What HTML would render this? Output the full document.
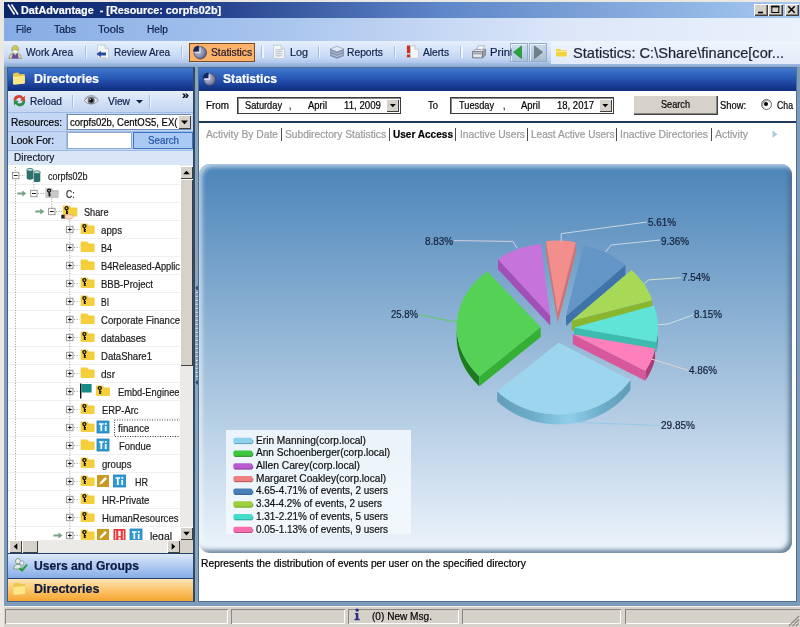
<!DOCTYPE html>
<html><head><meta charset="utf-8"><title>DatAdvantage</title>
<style>
html,body{margin:0;padding:0;width:800px;height:627px;overflow:hidden;background:#d6d2ca}
#root{position:relative;width:800px;height:627px;overflow:hidden;font-family:"Liberation Sans",sans-serif;will-change:transform}
#root div{position:absolute}
.t{position:absolute;white-space:pre;font-family:"Liberation Sans",sans-serif;transform-origin:0 50%;-webkit-text-stroke:0.2px currentColor}
</style></head><body><div id="root">
<div style="left:0px;top:0px;width:800px;height:627px;background:#d6d2ca"></div>
<div style="left:0px;top:0px;width:4px;height:627px;background:#ebe8e1"></div>
<div style="left:0px;top:0px;width:800px;height:2px;background:#ebe8e1"></div>
<div style="left:4px;top:2px;width:796px;height:16px;background:linear-gradient(90deg,#0a246a 0%,#1c3884 22%,#5f86c8 55%,#a6caf0 100%)"></div>
<div style="left:754px;top:3.5px;width:13.5px;height:12px;background:#d6d2ca;box-shadow:inset 1px 1px 0 #fff,inset -1px -1px 0 #404040,inset -2px -2px 0 #8a8780"></div>
<div style="left:768px;top:3.5px;width:14.5px;height:12px;background:#d6d2ca;box-shadow:inset 1px 1px 0 #fff,inset -1px -1px 0 #404040,inset -2px -2px 0 #8a8780"></div>
<div style="left:784.5px;top:3.5px;width:14px;height:12px;background:#d6d2ca;box-shadow:inset 1px 1px 0 #fff,inset -1px -1px 0 #404040,inset -2px -2px 0 #8a8780"></div>
<div style="left:4px;top:18px;width:796px;height:23px;background:linear-gradient(90deg,#86ace4 0%,#a9c5ee 35%,#dbe6f8 70%,#eaf1fb 100%)"></div>
<div style="left:4px;top:41px;width:796px;height:24px;background:linear-gradient(180deg,#e6effc 0%,#d2e1f8 45%,#c0d4f2 75%,#a5bfe6 100%)"></div>
<div style="left:4px;top:63px;width:796px;height:4px;background:linear-gradient(180deg,#a5bfe6,#86a6d0)"></div>
<div style="left:551px;top:41px;width:249px;height:23px;background:linear-gradient(180deg,#f0f5fd,#e2ebf9)"></div>
<div style="left:189px;top:43px;width:66px;height:18.5px;background:#fbb36c;border:1px solid #7a4a22;box-sizing:border-box"></div>
<div style="left:85.5px;top:45.5px;width:1.5px;height:12.5px;background:#eef4fd"></div>
<div style="left:84.8px;top:45.5px;width:0.7px;height:12.5px;background:#a9bfe0"></div>
<div style="left:181.5px;top:45.5px;width:1.5px;height:12.5px;background:#eef4fd"></div>
<div style="left:180.8px;top:45.5px;width:0.7px;height:12.5px;background:#a9bfe0"></div>
<div style="left:262px;top:45.5px;width:1.5px;height:12.5px;background:#eef4fd"></div>
<div style="left:261.3px;top:45.5px;width:0.7px;height:12.5px;background:#a9bfe0"></div>
<div style="left:318.5px;top:45.5px;width:1.5px;height:12.5px;background:#eef4fd"></div>
<div style="left:317.8px;top:45.5px;width:0.7px;height:12.5px;background:#a9bfe0"></div>
<div style="left:394.5px;top:45.5px;width:1.5px;height:12.5px;background:#eef4fd"></div>
<div style="left:393.8px;top:45.5px;width:0.7px;height:12.5px;background:#a9bfe0"></div>
<div style="left:461px;top:45.5px;width:1.5px;height:12.5px;background:#eef4fd"></div>
<div style="left:460.3px;top:45.5px;width:0.7px;height:12.5px;background:#a9bfe0"></div>
<div style="left:509.5px;top:43px;width:18px;height:18.5px;background:linear-gradient(180deg,#cfe0f0,#a8c4dc);border:1px solid #93adc8;box-sizing:border-box;box-shadow:inset 1px 1px 0 #e8f2fa"></div>
<div style="left:529px;top:43px;width:18px;height:18.5px;background:linear-gradient(180deg,#ccdae8,#a9bdd0);border:1px solid #93adc8;box-sizing:border-box;box-shadow:inset 1px 1px 0 #e8f2fa"></div>
<div style="left:4px;top:67px;width:796px;height:539px;background:#7e9cba"></div>
<div style="left:7px;top:67px;width:188px;height:535px;background:#3f5f8c"></div>
<div style="left:8px;top:68px;width:186px;height:23px;background:linear-gradient(180deg,#4278cc 0%,#2a5cb8 40%,#1a3f98 75%,#0f2d7c 100%)"></div>
<div style="left:8px;top:91px;width:186px;height:20px;background:linear-gradient(180deg,#e6eefb,#c3d5f2)"></div>
<div style="left:8px;top:111px;width:186px;height:40px;background:#c3d6f3"></div>
<div style="left:8px;top:151px;width:186px;height:14px;background:#d9e6f8"></div>
<div style="left:8px;top:165px;width:172px;height:375px;background:#fff"></div>
<div style="left:8px;top:184px;width:172px;height:1px;background:#efefef"></div>
<div style="left:8px;top:202px;width:172px;height:1px;background:#efefef"></div>
<div style="left:8px;top:220px;width:172px;height:1px;background:#efefef"></div>
<div style="left:8px;top:238px;width:172px;height:1px;background:#efefef"></div>
<div style="left:8px;top:256px;width:172px;height:1px;background:#efefef"></div>
<div style="left:8px;top:274px;width:172px;height:1px;background:#efefef"></div>
<div style="left:8px;top:292px;width:172px;height:1px;background:#efefef"></div>
<div style="left:8px;top:310px;width:172px;height:1px;background:#efefef"></div>
<div style="left:8px;top:328px;width:172px;height:1px;background:#efefef"></div>
<div style="left:8px;top:346px;width:172px;height:1px;background:#efefef"></div>
<div style="left:8px;top:364px;width:172px;height:1px;background:#efefef"></div>
<div style="left:8px;top:382px;width:172px;height:1px;background:#efefef"></div>
<div style="left:8px;top:400px;width:172px;height:1px;background:#efefef"></div>
<div style="left:8px;top:418px;width:172px;height:1px;background:#efefef"></div>
<div style="left:8px;top:436px;width:172px;height:1px;background:#efefef"></div>
<div style="left:8px;top:454px;width:172px;height:1px;background:#efefef"></div>
<div style="left:8px;top:472px;width:172px;height:1px;background:#efefef"></div>
<div style="left:8px;top:490px;width:172px;height:1px;background:#efefef"></div>
<div style="left:8px;top:508px;width:172px;height:1px;background:#efefef"></div>
<div style="left:8px;top:526px;width:172px;height:1px;background:#efefef"></div>
<div style="left:8px;top:544px;width:172px;height:1px;background:#efefef"></div>
<div style="left:8px;top:111.8px;width:186px;height:1px;background:#9fbbe6"></div>
<div style="left:8px;top:130.8px;width:186px;height:1px;background:#9fbbe6"></div>
<div style="left:8px;top:149.8px;width:186px;height:1px;background:#9fbbe6"></div>
<div style="left:65.5px;top:112px;width:1px;height:38px;background:#9fbbe6"></div>
<div style="left:67.3px;top:114.3px;width:124.2px;height:15.8px;background:#fff;border:1px solid #6f8db0;box-sizing:border-box"></div>
<div style="left:178.3px;top:115.4px;width:12.3px;height:13.6px;background:#d6d2ca;box-shadow:inset 1px 1px 0 #fff,inset -1px -1px 0 #404040"></div>
<div style="left:67px;top:132.4px;width:65px;height:16.4px;background:#fff;border:1px solid #8fa9cc;box-sizing:border-box"></div>
<div style="left:132.6px;top:131.8px;width:60.6px;height:17.2px;background:#aac9f3;border:1px solid #3f73c6;box-sizing:border-box"></div>
<div style="left:72.5px;top:94.5px;width:1px;height:13px;background:#eef4fd"></div>
<div style="left:71.8px;top:94.5px;width:0.7px;height:13px;background:#a9bfe0"></div>
<div style="left:149.5px;top:94.5px;width:1px;height:13px;background:#eef4fd"></div>
<div style="left:148.8px;top:94.5px;width:0.7px;height:13px;background:#a9bfe0"></div>
<div style="left:194.5px;top:67px;width:4.2px;height:535px;background:#8aa5bb"></div>
<div style="left:198.3px;top:67px;width:598.5px;height:534.8px;background:#4f7092"></div>
<div style="left:198.6px;top:68px;width:597.4px;height:23px;background:linear-gradient(180deg,#4278cc 0%,#2a5cb8 40%,#1a3f98 75%,#0f2d7c 100%)"></div>
<div style="left:198.6px;top:91px;width:597.4px;height:510.2px;background:#fff"></div>
<div style="left:198.6px;top:121.2px;width:597.4px;height:1.4px;background:#1f3b5c"></div>
<div style="left:237px;top:97px;width:164px;height:16.5px;background:#fff;border:1px solid #3c3c3c;box-shadow:inset 1px 1px 0 #8a8a8a;box-sizing:border-box"></div>
<div style="left:386.3px;top:99.3px;width:13px;height:12.6px;background:#d6d2ca;box-shadow:inset 1px 1px 0 #fff,inset -1px -1px 0 #404040"></div>
<div style="left:449.5px;top:97px;width:164px;height:16.5px;background:#fff;border:1px solid #3c3c3c;box-shadow:inset 1px 1px 0 #8a8a8a;box-sizing:border-box"></div>
<div style="left:598.8px;top:99.3px;width:13px;height:12.6px;background:#d6d2ca;box-shadow:inset 1px 1px 0 #fff,inset -1px -1px 0 #404040"></div>
<div style="left:633px;top:95px;width:85px;height:19.5px;background:#d6d2ca;box-shadow:inset 1px 1px 0 #fff,inset -1px -1px 0 #404040,inset -2px -2px 0 #8a8780"></div>
<div style="left:760.5px;top:98.5px;width:11px;height:11px;background:#fff;border-radius:50%;border:1px solid #6a6a6a;box-sizing:border-box;box-shadow:inset 1px 1px 1px #999"></div>
<div style="left:764px;top:102px;width:4px;height:4px;background:#000;border-radius:50%"></div>
<div style="left:281px;top:128.3px;width:1.2px;height:12.4px;background:#4a4a4a"></div>
<div style="left:389px;top:128.3px;width:1.2px;height:12.4px;background:#4a4a4a"></div>
<div style="left:455.3px;top:128.3px;width:1.2px;height:12.4px;background:#4a4a4a"></div>
<div style="left:527px;top:128.3px;width:1.2px;height:12.4px;background:#4a4a4a"></div>
<div style="left:616px;top:128.3px;width:1.2px;height:12.4px;background:#4a4a4a"></div>
<div style="left:710.5px;top:128.3px;width:1.2px;height:12.4px;background:#4a4a4a"></div>
<div style="left:199.3px;top:163.8px;width:592.9px;height:389px;border-radius:11px;background:linear-gradient(180deg,#4b85b9 0%,#edf4fb 100%);box-shadow:inset 3px 3px 4px rgba(255,255,255,.6),inset -3px -3px 4px rgba(70,100,130,.8)"></div>
<div style="left:225.5px;top:429.8px;width:185px;height:104.6px;background:rgba(243,249,254,.85)"></div>
<div style="left:8px;top:553px;width:186px;height:24.5px;background:linear-gradient(180deg,#dde9fb 0%,#b5cdf2 45%,#86ade6 100%);border-top:1px solid #23406f;box-sizing:border-box"></div>
<div style="left:8px;top:577.5px;width:186px;height:23.5px;background:linear-gradient(180deg,#fee6b6 0%,#fcc873 45%,#f6a530 100%);border-top:1px solid #23406f;box-sizing:border-box"></div>
<div style="left:4px;top:606px;width:796px;height:21px;background:#d6d2ca"></div>
<div style="left:4px;top:606px;width:796px;height:1px;background:#f4f2ee"></div>
<div style="left:5px;top:608.5px;width:223px;height:15.5px;box-shadow:inset 1px 1px 0 #8a8780,inset -1px -1px 0 #fff"></div>
<div style="left:231px;top:608.5px;width:114px;height:15.5px;box-shadow:inset 1px 1px 0 #8a8780,inset -1px -1px 0 #fff"></div>
<div style="left:348px;top:608.5px;width:111px;height:15.5px;box-shadow:inset 1px 1px 0 #8a8780,inset -1px -1px 0 #fff"></div>
<div style="left:462px;top:608.5px;width:159px;height:15.5px;box-shadow:inset 1px 1px 0 #8a8780,inset -1px -1px 0 #fff"></div>
<div style="left:625px;top:608.5px;width:185px;height:15.5px;box-shadow:inset 1px 1px 0 #8a8780,inset -1px -1px 0 #fff"></div>
<svg width="800" height="627" viewBox="0 0 800 627" style="position:absolute;left:0;top:0"><defs><linearGradient id="w_lb" gradientUnits="userSpaceOnUse" x1="475" x2="643" y1="0" y2="0"><stop offset="0" stop-color="#5a93ad"/><stop offset="0.35" stop-color="#6eaecb"/><stop offset="0.56" stop-color="#8fcfea"/><stop offset="0.75" stop-color="#6eaecb"/><stop offset="1" stop-color="#5a93ad"/></linearGradient><linearGradient id="w_gr" gradientUnits="userSpaceOnUse" x1="457" x2="625" y1="0" y2="0"><stop offset="0" stop-color="#1d7a1d"/><stop offset="0.12" stop-color="#1d7a1d"/><stop offset="0.3" stop-color="#2a9a2a"/><stop offset="1" stop-color="#2a9a2a"/></linearGradient><linearGradient id="w_pu" gradientUnits="userSpaceOnUse" x1="466" x2="634" y1="0" y2="0"><stop offset="0" stop-color="#a24fb6"/><stop offset="0.8" stop-color="#a24fb6"/><stop offset="1" stop-color="#8b3f9e"/></linearGradient><linearGradient id="w_sa" gradientUnits="userSpaceOnUse" x1="474" x2="642" y1="0" y2="0"><stop offset="0" stop-color="#cf6c6a"/><stop offset="0.8" stop-color="#cf6c6a"/><stop offset="1" stop-color="#b85a58"/></linearGradient><linearGradient id="w_st" gradientUnits="userSpaceOnUse" x1="482" x2="650" y1="0" y2="0"><stop offset="0" stop-color="#4176ab"/><stop offset="0.8" stop-color="#4176ab"/><stop offset="1" stop-color="#356394"/></linearGradient><linearGradient id="w_yg" gradientUnits="userSpaceOnUse" x1="488" x2="656" y1="0" y2="0"><stop offset="0" stop-color="#86b732"/><stop offset="0.8" stop-color="#86b732"/><stop offset="1" stop-color="#74a028"/></linearGradient><linearGradient id="w_cy" gradientUnits="userSpaceOnUse" x1="490" x2="658" y1="0" y2="0"><stop offset="0" stop-color="#3cbbae"/><stop offset="0.8" stop-color="#3cbbae"/><stop offset="1" stop-color="#2f9a90"/></linearGradient><linearGradient id="w_pk" gradientUnits="userSpaceOnUse" x1="489" x2="657" y1="0" y2="0"><stop offset="0" stop-color="#c04a88"/><stop offset="0.8" stop-color="#c04a88"/><stop offset="1" stop-color="#a83a74"/></linearGradient></defs><path d="M557.7 312.5 L545.9 241.2 L545.9 251.2 L557.7 322.5Z" fill="#d4716f" />
<path d="M557.7 312.5 L575.9 242.2 L575.9 252.2 L557.7 322.5Z" fill="#d4716f" />
<path d="M557.7 312.5 L545.9 241.2 L548.6 240.9 L551.3 240.7 L554.1 240.6 L556.8 240.5 L559.6 240.5 L562.3 240.6 L565.0 240.8 L567.8 241.0 L570.5 241.3 L573.2 241.7 L575.9 242.2Z" fill="#f28e8c" />
<path d="M550.2 315.6 L498.0 259.2 L498.0 269.2 L550.2 325.6Z" fill="#a24fb6" />
<path d="M550.2 315.6 L498.0 259.2 L500.2 257.7 L502.5 256.4 L504.8 255.0 L507.1 253.8 L509.5 252.6 L512.0 251.5 L514.5 250.4 L517.0 249.5 L519.5 248.6 L522.1 247.7 L524.8 247.0 L527.4 246.3 L530.1 245.7 L532.8 245.2 L535.5 244.7 L538.2 244.3 L541.0 244.0Z" fill="#c773dc" />
<path d="M566.0 316.0 L625.4 265.1 L625.4 275.1 L566.0 326.0Z" fill="#3f74aa" />
<path d="M566.0 316.0 L583.5 245.6 L586.2 246.1 L589.0 246.7 L591.7 247.5 L594.4 248.2 L597.1 249.1 L599.7 250.0 L602.3 251.1 L604.8 252.2 L607.3 253.3 L609.8 254.6 L612.2 255.9 L614.5 257.2 L616.8 258.7 L619.1 260.2 L621.2 261.8 L623.4 263.4 L625.4 265.1Z" fill="#6395c6" />
<path d="M571.7 320.7 L652.2 300.3 L652.2 310.3 L571.7 330.7Z" fill="#8ab52e" />
<path d="M571.7 320.7 L631.5 270.1 L633.4 271.8 L635.2 273.6 L637.0 275.4 L638.7 277.3 L640.3 279.2 L641.9 281.1 L643.3 283.1 L644.7 285.1 L646.0 287.2 L647.3 289.3 L648.4 291.4 L649.5 293.6 L650.5 295.8 L651.4 298.0 L652.2 300.3Z" fill="#a7d956" />
<path d="M479.4 376.2 L477.4 374.4 L475.6 372.5 L473.8 370.6 L472.1 368.6 L470.5 366.5 L469.0 364.5 L467.5 362.3 L466.1 360.2 L464.9 358.0 L463.7 355.7 L462.6 353.4 L461.6 351.1 L460.6 348.8 L459.8 346.5 L459.1 344.1 L458.5 341.7 L457.9 339.2 L457.5 336.8 L457.1 334.4 L456.9 331.9 L456.7 329.5 L456.7 327.0 L456.7 337.0 L456.7 339.5 L456.9 341.9 L457.1 344.4 L457.5 346.8 L457.9 349.2 L458.5 351.7 L459.1 354.1 L459.8 356.5 L460.6 358.8 L461.6 361.1 L462.6 363.4 L463.7 365.7 L464.9 368.0 L466.1 370.2 L467.5 372.3 L469.0 374.5 L470.5 376.5 L472.1 378.6 L473.8 380.6 L475.6 382.5 L477.4 384.4 L479.4 386.2Z" fill="url(#w_gr)" />
<path d="M540.7 327.0 L479.4 376.2 L479.4 386.2 L540.7 337.0Z" fill="#34b034" />
<path d="M540.7 327.0 L479.4 376.2 L477.4 374.3 L475.5 372.4 L473.7 370.5 L472.0 368.4 L470.4 366.4 L468.8 364.2 L467.3 362.1 L466.0 359.9 L464.7 357.6 L463.5 355.3 L462.4 353.0 L461.4 350.7 L460.4 348.3 L459.6 345.9 L458.9 343.4 L458.3 341.0 L457.8 338.5 L457.4 336.0 L457.0 333.6 L456.8 331.1 L456.7 328.6 L456.7 326.0 L456.8 323.5 L457.0 321.0 L457.3 318.5 L457.7 316.1 L458.2 313.6 L458.8 311.1 L459.5 308.7 L460.2 306.3 L461.1 303.9 L462.1 301.6 L463.2 299.2 L464.4 296.9 L465.6 294.7 L467.0 292.5 L468.4 290.3 L470.0 288.1 L471.6 286.1 L473.3 284.0 L475.1 282.0 L477.0 280.1 L478.9 278.2 L480.9 276.4 L483.0 274.7 L485.2 273.0 L487.4 271.4Z" fill="#55d155" />
<path d="M658.0 327.5 L658.0 329.9 L657.8 332.3 L657.6 334.7 L657.2 337.1 L656.8 339.5 L656.3 341.9 L656.3 351.9 L656.8 349.5 L657.2 347.1 L657.6 344.7 L657.8 342.3 L658.0 339.9 L658.0 337.5Z" fill="url(#w_cy)" />
<path d="M574.0 327.5 L656.3 341.9 L656.3 351.9 L574.0 337.5Z" fill="#3cbbae" />
<path d="M574.0 327.5 L654.0 305.6 L654.8 308.0 L655.6 310.3 L656.2 312.7 L656.7 315.1 L657.2 317.5 L657.5 319.9 L657.8 322.4 L657.9 324.8 L658.0 327.3 L658.0 329.7 L657.8 332.2 L657.6 334.6 L657.3 337.0 L656.8 339.4 L656.3 341.9Z" fill="#60e4d7" />
<path d="M655.1 348.5 L654.5 350.9 L653.9 353.2 L653.1 355.5 L652.2 357.7 L651.3 360.0 L650.2 362.2 L649.1 364.4 L647.9 366.5 L646.6 368.7 L645.3 370.7 L645.3 380.7 L646.6 378.7 L647.9 376.5 L649.1 374.4 L650.2 372.2 L651.3 370.0 L652.2 367.7 L653.1 365.5 L653.9 363.2 L654.5 360.9 L655.1 358.5Z" fill="url(#w_pk)" />
<path d="M572.8 334.3 L645.3 370.7 L645.3 380.7 L572.8 344.3Z" fill="#d7579a" />
<path d="M572.8 334.3 L655.1 348.5 L654.5 350.9 L653.9 353.2 L653.1 355.5 L652.2 357.7 L651.3 360.0 L650.2 362.2 L649.1 364.4 L647.9 366.5 L646.6 368.7 L645.3 370.7Z" fill="#fb80bb" />
<path d="M630.4 379.9 L628.8 382.0 L627.2 384.1 L625.4 386.1 L623.6 388.1 L621.7 390.0 L619.8 391.8 L617.7 393.6 L615.6 395.4 L613.4 397.0 L611.1 398.6 L608.8 400.2 L606.5 401.6 L604.0 403.0 L601.5 404.3 L599.0 405.6 L596.4 406.7 L593.8 407.8 L591.1 408.8 L588.4 409.8 L585.6 410.6 L582.8 411.4 L580.0 412.0 L577.1 412.6 L574.3 413.2 L571.4 413.6 L568.5 413.9 L565.6 414.2 L562.7 414.3 L559.7 414.4 L556.8 414.4 L553.9 414.3 L551.0 414.1 L548.1 413.8 L545.2 413.5 L542.3 413.0 L539.4 412.5 L536.6 411.9 L533.8 411.2 L531.0 410.4 L528.3 409.5 L525.5 408.6 L522.9 407.5 L520.3 406.4 L517.7 405.2 L515.1 404.0 L512.7 402.6 L510.3 401.2 L507.9 399.7 L505.6 398.2 L503.4 396.6 L501.2 394.9 L499.1 393.1 L497.1 391.3 L497.1 401.3 L499.1 403.1 L501.2 404.9 L503.4 406.6 L505.6 408.2 L507.9 409.7 L510.3 411.2 L512.7 412.6 L515.1 414.0 L517.7 415.2 L520.3 416.4 L522.9 417.5 L525.5 418.6 L528.3 419.5 L531.0 420.4 L533.8 421.2 L536.6 421.9 L539.4 422.5 L542.3 423.0 L545.2 423.5 L548.1 423.8 L551.0 424.1 L553.9 424.3 L556.8 424.4 L559.7 424.4 L562.7 424.3 L565.6 424.2 L568.5 423.9 L571.4 423.6 L574.3 423.2 L577.1 422.6 L580.0 422.0 L582.8 421.4 L585.6 420.6 L588.4 419.8 L591.1 418.8 L593.8 417.8 L596.4 416.7 L599.0 415.6 L601.5 414.3 L604.0 413.0 L606.5 411.6 L608.8 410.2 L611.1 408.6 L613.4 407.0 L615.6 405.4 L617.7 403.6 L619.8 401.8 L621.7 400.0 L623.6 398.1 L625.4 396.1 L627.2 394.1 L628.8 392.0 L630.4 389.9Z" fill="url(#w_lb)" />
<path d="M558.7 342.4 L630.4 379.9 L628.8 382.0 L627.2 384.1 L625.4 386.1 L623.6 388.1 L621.7 390.0 L619.8 391.8 L617.7 393.6 L615.6 395.4 L613.4 397.0 L611.1 398.6 L608.8 400.2 L606.5 401.6 L604.0 403.0 L601.5 404.3 L599.0 405.6 L596.4 406.7 L593.8 407.8 L591.1 408.8 L588.4 409.8 L585.6 410.6 L582.8 411.4 L580.0 412.0 L577.1 412.6 L574.3 413.2 L571.4 413.6 L568.5 413.9 L565.6 414.2 L562.7 414.3 L559.7 414.4 L556.8 414.4 L553.9 414.3 L551.0 414.1 L548.1 413.8 L545.2 413.5 L542.3 413.0 L539.4 412.5 L536.6 411.9 L533.8 411.2 L531.0 410.4 L528.3 409.5 L525.5 408.6 L522.9 407.5 L520.3 406.4 L517.7 405.2 L515.1 404.0 L512.7 402.6 L510.3 401.2 L507.9 399.7 L505.6 398.2 L503.4 396.6 L501.2 394.9 L499.1 393.1 L497.1 391.3Z" fill="#9dd5ee" /><polyline points="561.2,242.0 561.2,233.7 647.0,222.0" fill="none" stroke="#c9d6e2" stroke-width="1"/><polyline points="605.5,252.0 611.2,245.0 660.0,240.0" fill="none" stroke="#c9d6e2" stroke-width="1"/><polyline points="643.7,283.7 648.8,279.9 681.0,277.7" fill="none" stroke="#d5e2c8" stroke-width="1"/><polyline points="658.3,324.8 668.0,324.0 693.0,315.0" fill="none" stroke="#cfe3e6" stroke-width="1"/><polyline points="651.1,359.0 659.0,361.3 688.0,370.3" fill="none" stroke="#e6d2c4" stroke-width="1"/><polyline points="567.5,416.0 567.5,422.0 660.0,425.5" fill="none" stroke="#93cbe6" stroke-width="1"/><polyline points="457.5,321.3 451.5,321.2 419.0,314.8" fill="none" stroke="#5ccf5c" stroke-width="1"/><polyline points="517.2,248.4 512.8,241.4 454.0,240.6" fill="none" stroke="#d5cfe2" stroke-width="1"/>
<path d="M758 12.5 H763" stroke="#000" stroke-width="1.6"/>
<rect x="771.8" y="6.3" width="7" height="6.2" fill="none" stroke="#000" stroke-width="1"/><path d="M771.3 6.6 H779.3" stroke="#000" stroke-width="1.6"/>
<path d="M788.3 6.3 L794.7 12.7 M794.7 6.3 L788.3 12.7" stroke="#000" stroke-width="1.5"/>
<path d="M8 4.5 L14.5 14.5 M11.5 4.5 L18 14.5" stroke="#fff" stroke-width="1.6"/>
<path d="M521.5 46 V58.5 L513.5 52.2Z" fill="#2aa23a" stroke="#1a7a2a" stroke-width="0.6"/>
<path d="M534.5 46 V58.5 L542.5 52.2Z" fill="#6f8088" stroke="#54646c" stroke-width="0.6"/>
<g transform="translate(8.30 45.30) scale(1)"><path d="M0.5 13.2 Q1 8.6 4.2 8 L9.6 8 Q12.8 8.6 13.4 13.2Z" fill="#cfd6ac" stroke="#7d8a4a" stroke-width="0.6"/><path d="M3.3 13.2 L4.4 8.2 H9.4 L10.5 13.2Z" fill="#6b4aa0"/><ellipse cx="6.9" cy="6" rx="2.9" ry="2.6" fill="#eef3e4" stroke="#7d8a4a" stroke-width="0.5"/><path d="M3.3 5 Q3.4 0.3 6.9 0.3 Q10.4 0.3 10.5 5 Q6.9 3.6 3.3 5Z" fill="#cdc85a" stroke="#8a8a30" stroke-width="0.5"/><circle cx="6.9" cy="9.3" r="0.6" fill="#fff"/></g>
<g transform="translate(97.00 45.00) scale(1)"><g transform="translate(0.50 0.00) scale(1)"><path d="M0 0 H7.5 L11 3.5 V14 H0Z" fill="#f4f6f8" stroke="#b9c2cc" stroke-width="0.7"/><path d="M7.5 0 V3.5 H11" fill="#dde3ea" stroke="#b0bac6" stroke-width="0.6"/></g><path d="M-0.5 9 L3.8 5.8 V7.6 H9 V10.4 H3.8 V12.2Z" fill="#2b4a9c"/><path d="M1.5 12.8 H9.5" stroke="#9fb0d8" stroke-width="0.8"/></g>
<g transform="translate(200.00 52.30) scale(1)"><defs><radialGradient id="sg200" cx="0.35" cy="0.4" r="0.75"><stop offset="0" stop-color="#c4c6d8"/><stop offset="0.55" stop-color="#8b8dac"/><stop offset="1" stop-color="#4a4c6c"/></radialGradient></defs><circle cx="0.3" cy="0.5" r="6.2" fill="url(#sg200)" stroke="#3a3d5e" stroke-width="0.7"/><path d="M-1.2 -0.9 L-1.2 -6.8 A6.0 6.0 0 0 0 -7.0 -0.9 Z" fill="#16265a"/><path d="M0.2 0.4 H-5.5 M0.2 0.4 V-5.5" stroke="#eceef6" stroke-width="0.9" opacity=".85"/></g>
<g transform="translate(273.50 45.30) scale(1)"><path d="M0 0 H7.5 L11 3.5 V13.2 H0Z" fill="#f4f6f8" stroke="#b9c2cc" stroke-width="0.7"/><path d="M7.5 0 V3.5 H11" fill="#dde3ea" stroke="#b0bac6" stroke-width="0.6"/><path d="M1.8 4.5 H9" stroke="#aab2bc" stroke-width="0.8"/><path d="M1.8 6.5 H9" stroke="#aab2bc" stroke-width="0.8"/><path d="M1.8 8.5 H9" stroke="#aab2bc" stroke-width="0.8"/><path d="M1.8 10.5 H9" stroke="#aab2bc" stroke-width="0.8"/><path d="M5.5 4 V11.5" stroke="#c4cad2" stroke-width="0.6"/></g>
<g transform="translate(330.00 45.50) scale(1)"><path d="M0 8.7 L7 11.4 L14 8.7 V10.5 L7 13.2 L0 10.5Z" fill="#7f8fb0"/><path d="M0 8.7 L7 6.0 L14 8.7 L7 11.4Z" fill="#e3e9f2" stroke="#7f8fb0" stroke-width="0.6"/><path d="M0 6.1 L7 8.8 L14 6.1 V7.8999999999999995 L7 10.6 L0 7.8999999999999995Z" fill="#7f8fb0"/><path d="M0 6.1 L7 3.3999999999999995 L14 6.1 L7 8.8Z" fill="#e3e9f2" stroke="#7f8fb0" stroke-width="0.6"/><path d="M0 3.5 L7 6.2 L14 3.5 V5.3 L7 8 L0 5.3Z" fill="#7f8fb0"/><path d="M0 3.5 L7 0.8 L14 3.5 L7 6.2Z" fill="#e3e9f2" stroke="#7f8fb0" stroke-width="0.6"/></g>
<g transform="translate(406.30 45.50) scale(1)"><g transform="translate(4.20 0.30) scale(1)"><path d="M0 0 H4.5 L8 3.5 V12.5 H0Z" fill="#f4f6f8" stroke="#b9c2cc" stroke-width="0.7"/><path d="M4.5 0 V3.5 H8" fill="#dde3ea" stroke="#b0bac6" stroke-width="0.6"/></g><rect x="0.6" y="0" width="3.2" height="7.6" fill="#c8321e"/><rect x="0.6" y="9" width="3.2" height="2.8" fill="#c8321e"/></g>
<g transform="translate(472.00 45.30) scale(1)"><path d="M4.2 4.6 L6.4 0.6 H12.6 L10.8 4.6Z" fill="#fbfcfd" stroke="#8a929c" stroke-width="0.6"/><path d="M0.5 6.4 L3.6 4 H13.6 L10.6 6.4Z" fill="#e4e7eb" stroke="#6f7780" stroke-width="0.6"/><path d="M0.5 6.4 H10.6 V12.6 H0.5Z" fill="#c3c8ce" stroke="#5f6770" stroke-width="0.7"/><path d="M10.6 6.4 L13.6 4 V9.6 L10.6 12.6Z" fill="#9aa1a9" stroke="#5f6770" stroke-width="0.6"/><path d="M1.6 10.6 H9.4" stroke="#f4f6f8" stroke-width="1.5"/><path d="M1.6 8.2 H9.4" stroke="#8a929c" stroke-width="0.6"/></g>
<g transform="translate(556.00 49.00) scale(1)"><path d="M0 1 Q0 0 1 0 H4 L5 1.3 H9.8 Q10.8 1.3 10.8 2.3 V6.5 Q10.8 7.5 9.8 7.5 H1 Q0 7.5 0 6.5Z" fill="#f3d23c"/><path d="M0 2.6 H10.8" stroke="#fff3a8" stroke-width="0.8"/></g>
<path d="M181 120.4 H188 L184.5 124.3Z" fill="#000"/>
<path d="M136 100 H143 L139.5 103.6Z" fill="#10204a"/>
<g transform="translate(12.50 72.30) scale(1)"><path d="M0.5 2.2 Q0.5 1 1.8 0.8 L5 0.3 Q6.2 0.2 6.6 1.2 L7 2 L11 1.6 Q12.3 1.6 12.3 2.8 V10.2 Q12.3 11.4 11 11.5 L1.8 12.2 Q0.5 12.2 0.5 11Z" fill="#e9c84a"/><path d="M0.5 4.4 L12.3 3.6 V10.2 Q12.3 11.4 11 11.5 L1.8 12.2 Q0.5 12.2 0.5 11Z" fill="#fae888"/></g>
<g transform="translate(12.60 94.00) scale(1)"><path d="M1 6.5 A5.3 5.3 0 0 1 10.6 3.2 L12.2 1.8 L12.4 7 L7.4 6.4 L8.9 4.9 A3 3 0 0 0 3.6 6.6Z" fill="#d2432a"/><path d="M12.6 6.8 A5.3 5.3 0 0 1 3 10.1 L1.4 11.5 L1.2 6.3 L6.2 6.9 L4.7 8.4 A3 3 0 0 0 10 6.7Z" fill="#2f8f4a"/></g>
<g transform="translate(84.00 95.30) scale(1)"><path d="M0 5.3 Q7.2 -2.4 14.4 5.3 Q7.2 12.6 0 5.3Z" fill="#eef1f6" stroke="#7a8088" stroke-width="0.8"/><circle cx="7.2" cy="5.2" r="3.6" fill="#6a6e78"/><circle cx="7.2" cy="5.2" r="2" fill="#0a0a10"/><circle cx="6.3" cy="4.3" r="0.7" fill="#fff"/><path d="M0.6 3.6 Q7.2 -3.2 13.8 3.6" fill="none" stroke="#8a9098" stroke-width="0.9"/></g>
<g transform="translate(209.50 79.00) scale(1)"><defs><radialGradient id="sg209" cx="0.35" cy="0.4" r="0.75"><stop offset="0" stop-color="#c4c6d8"/><stop offset="0.55" stop-color="#8b8dac"/><stop offset="1" stop-color="#4a4c6c"/></radialGradient></defs><circle cx="0.3" cy="0.5" r="6" fill="url(#sg209)" stroke="#3a3d5e" stroke-width="0.7"/><path d="M-1.2 -0.9 L-1.2 -6.6 A5.8 5.8 0 0 0 -6.8 -0.9 Z" fill="#16265a"/><path d="M0.2 0.4 H-5.5 M0.2 0.4 V-5.5" stroke="#eceef6" stroke-width="0.9" opacity=".85"/></g>
<path d="M389.8 104 H395.8 L392.8 107.3Z" fill="#000"/>
<path d="M602.3 104 H608.3 L605.3 107.3Z" fill="#000"/>
<path d="M772.5 130.5 L777.5 134.3 L772.5 138Z" fill="#a9ccd8"/>
<rect x="233.3" y="437.8" width="19.2" height="6" rx="2" fill="#8fd0ec"/><path d="M234.5 443.6 H252 Q253 443.4 252.8 440.2" fill="none" stroke="#5d9cb8" stroke-width="1"/>
<rect x="233.3" y="450.5" width="19.2" height="6" rx="2" fill="#3fc63f"/><path d="M234.5 456.3 H252 Q253 456.1 252.8 452.9" fill="none" stroke="#228a22" stroke-width="1"/>
<rect x="233.3" y="463.2" width="19.2" height="6" rx="2" fill="#b85bd0"/><path d="M234.5 469.0 H252 Q253 468.8 252.8 465.6" fill="none" stroke="#8a3aa0" stroke-width="1"/>
<rect x="233.3" y="475.9" width="19.2" height="6" rx="2" fill="#ee8080"/><path d="M234.5 481.7 H252 Q253 481.5 252.8 478.3" fill="none" stroke="#b85858" stroke-width="1"/>
<rect x="233.3" y="488.6" width="19.2" height="6" rx="2" fill="#4a7fb6"/><path d="M234.5 494.4 H252 Q253 494.2 252.8 491.0" fill="none" stroke="#2f5f90" stroke-width="1"/>
<rect x="233.3" y="501.3" width="19.2" height="6" rx="2" fill="#9bd03e"/><path d="M234.5 507.1 H252 Q253 506.9 252.8 503.7" fill="none" stroke="#74a028" stroke-width="1"/>
<rect x="233.3" y="514.0" width="19.2" height="6" rx="2" fill="#46dccc"/><path d="M234.5 519.8 H252 Q253 519.6 252.8 516.4" fill="none" stroke="#2aa89a" stroke-width="1"/>
<rect x="233.3" y="526.7" width="19.2" height="6" rx="2" fill="#fa6aae"/><path d="M234.5 532.5 H252 Q253 532.3 252.8 529.1" fill="none" stroke="#c04a88" stroke-width="1"/>
<g transform="translate(13.00 558.00) scale(1)"><circle cx="5" cy="3.2" r="2.6" fill="#e9eef2" stroke="#5f8a5a" stroke-width="0.7"/><path d="M0.6 11 Q0.8 6.4 5 6.4 Q9.2 6.4 9.4 11Z" fill="#dfe8e2" stroke="#5f8a5a" stroke-width="0.7"/><circle cx="8.8" cy="5" r="2.2" fill="#e9eef2" stroke="#5f7f9a" stroke-width="0.6"/><path d="M6.5 10 L9 12.6 L14 6.6" fill="none" stroke="#2b9a3a" stroke-width="2"/></g>
<g transform="translate(13.00 582.50) scale(1)"><path d="M0.5 2.2 Q0.5 1 1.8 0.8 L5 0.3 Q6.2 0.2 6.6 1.2 L7 2 L11 1.6 Q12.3 1.6 12.3 2.8 V10.2 Q12.3 11.4 11 11.5 L1.8 12.2 Q0.5 12.2 0.5 11Z" fill="#e9c84a"/><path d="M0.5 4.4 L12.3 3.6 V10.2 Q12.3 11.4 11 11.5 L1.8 12.2 Q0.5 12.2 0.5 11Z" fill="#fae888"/></g>
<g transform="translate(354.50 608.50) scale(1)"><circle cx="2.6" cy="1.6" r="1.7" fill="#2b2f86"/><path d="M0.6 4.4 H3.8 V10.2 H5.2 V11.8 H0 V10.2 H1.4 V6 H0.6Z" fill="#2b2f86"/></g>
<path d="M789 626 L799 616 M792.5 626 L799 619.5 M796 626 L799 623" stroke="#8a8780" stroke-width="1.2"/>
<path d="M15.5 167 V540" stroke="#9a9a9a" stroke-width="1" stroke-dasharray="1 1.6"/>
<path d="M33.9 181.5 V189.5" stroke="#9a9a9a" stroke-width="1" stroke-dasharray="1 1.6"/>
<path d="M51.8 198.5 V207.5" stroke="#9a9a9a" stroke-width="1" stroke-dasharray="1 1.6"/>
<path d="M69.8 218.5 V540" stroke="#9a9a9a" stroke-width="1" stroke-dasharray="1 1.6"/>
<path d="M19.5 175.5 H25" stroke="#9a9a9a" stroke-width="1" stroke-dasharray="1 1.6"/>
<path d="M38 193.5 H44" stroke="#9a9a9a" stroke-width="1" stroke-dasharray="1 1.6"/>
<path d="M56 211.5 H62" stroke="#9a9a9a" stroke-width="1" stroke-dasharray="1 1.6"/>
<path d="M74 229.5 H79.5" stroke="#9a9a9a" stroke-width="1" stroke-dasharray="1 1.6"/>
<path d="M74 247.5 H79.5" stroke="#9a9a9a" stroke-width="1" stroke-dasharray="1 1.6"/>
<path d="M74 265.5 H79.5" stroke="#9a9a9a" stroke-width="1" stroke-dasharray="1 1.6"/>
<path d="M74 283.5 H79.5" stroke="#9a9a9a" stroke-width="1" stroke-dasharray="1 1.6"/>
<path d="M74 301.5 H79.5" stroke="#9a9a9a" stroke-width="1" stroke-dasharray="1 1.6"/>
<path d="M74 319.5 H79.5" stroke="#9a9a9a" stroke-width="1" stroke-dasharray="1 1.6"/>
<path d="M74 337.5 H79.5" stroke="#9a9a9a" stroke-width="1" stroke-dasharray="1 1.6"/>
<path d="M74 355.5 H79.5" stroke="#9a9a9a" stroke-width="1" stroke-dasharray="1 1.6"/>
<path d="M74 373.5 H79.5" stroke="#9a9a9a" stroke-width="1" stroke-dasharray="1 1.6"/>
<path d="M74 391.5 H79.5" stroke="#9a9a9a" stroke-width="1" stroke-dasharray="1 1.6"/>
<path d="M74 409.5 H79.5" stroke="#9a9a9a" stroke-width="1" stroke-dasharray="1 1.6"/>
<path d="M74 427.5 H79.5" stroke="#9a9a9a" stroke-width="1" stroke-dasharray="1 1.6"/>
<path d="M74 445.5 H79.5" stroke="#9a9a9a" stroke-width="1" stroke-dasharray="1 1.6"/>
<path d="M74 463.5 H79.5" stroke="#9a9a9a" stroke-width="1" stroke-dasharray="1 1.6"/>
<path d="M74 481.5 H79.5" stroke="#9a9a9a" stroke-width="1" stroke-dasharray="1 1.6"/>
<path d="M74 499.5 H79.5" stroke="#9a9a9a" stroke-width="1" stroke-dasharray="1 1.6"/>
<path d="M74 517.5 H79.5" stroke="#9a9a9a" stroke-width="1" stroke-dasharray="1 1.6"/>
<path d="M74 535.5 H79.5" stroke="#9a9a9a" stroke-width="1" stroke-dasharray="1 1.6"/>
<g transform="translate(15.70 175.50) scale(1)"><rect x="-3.2" y="-3.2" width="6.4" height="6.4" fill="#fff" stroke="#8c8c8c" stroke-width="0.9"/><path d="M-1.9 0 H1.9" stroke="#000" stroke-width="0.9"/></g>
<g transform="translate(33.90 193.50) scale(1)"><rect x="-3.2" y="-3.2" width="6.4" height="6.4" fill="#fff" stroke="#8c8c8c" stroke-width="0.9"/><path d="M-1.9 0 H1.9" stroke="#000" stroke-width="0.9"/></g>
<g transform="translate(51.80 211.50) scale(1)"><rect x="-3.2" y="-3.2" width="6.4" height="6.4" fill="#fff" stroke="#8c8c8c" stroke-width="0.9"/><path d="M-1.9 0 H1.9" stroke="#000" stroke-width="0.9"/></g>
<g transform="translate(69.80 229.50) scale(1)"><rect x="-3.2" y="-3.2" width="6.4" height="6.4" fill="#fff" stroke="#8c8c8c" stroke-width="0.9"/><path d="M-1.9 0 H1.9" stroke="#000" stroke-width="0.9"/><path d="M0 -1.9 V1.9" stroke="#000" stroke-width="0.9"/></g>
<g transform="translate(69.80 247.50) scale(1)"><rect x="-3.2" y="-3.2" width="6.4" height="6.4" fill="#fff" stroke="#8c8c8c" stroke-width="0.9"/><path d="M-1.9 0 H1.9" stroke="#000" stroke-width="0.9"/><path d="M0 -1.9 V1.9" stroke="#000" stroke-width="0.9"/></g>
<g transform="translate(69.80 265.50) scale(1)"><rect x="-3.2" y="-3.2" width="6.4" height="6.4" fill="#fff" stroke="#8c8c8c" stroke-width="0.9"/><path d="M-1.9 0 H1.9" stroke="#000" stroke-width="0.9"/><path d="M0 -1.9 V1.9" stroke="#000" stroke-width="0.9"/></g>
<g transform="translate(69.80 283.50) scale(1)"><rect x="-3.2" y="-3.2" width="6.4" height="6.4" fill="#fff" stroke="#8c8c8c" stroke-width="0.9"/><path d="M-1.9 0 H1.9" stroke="#000" stroke-width="0.9"/><path d="M0 -1.9 V1.9" stroke="#000" stroke-width="0.9"/></g>
<g transform="translate(69.80 301.50) scale(1)"><rect x="-3.2" y="-3.2" width="6.4" height="6.4" fill="#fff" stroke="#8c8c8c" stroke-width="0.9"/><path d="M-1.9 0 H1.9" stroke="#000" stroke-width="0.9"/><path d="M0 -1.9 V1.9" stroke="#000" stroke-width="0.9"/></g>
<g transform="translate(69.80 319.50) scale(1)"><rect x="-3.2" y="-3.2" width="6.4" height="6.4" fill="#fff" stroke="#8c8c8c" stroke-width="0.9"/><path d="M-1.9 0 H1.9" stroke="#000" stroke-width="0.9"/><path d="M0 -1.9 V1.9" stroke="#000" stroke-width="0.9"/></g>
<g transform="translate(69.80 337.50) scale(1)"><rect x="-3.2" y="-3.2" width="6.4" height="6.4" fill="#fff" stroke="#8c8c8c" stroke-width="0.9"/><path d="M-1.9 0 H1.9" stroke="#000" stroke-width="0.9"/><path d="M0 -1.9 V1.9" stroke="#000" stroke-width="0.9"/></g>
<g transform="translate(69.80 355.50) scale(1)"><rect x="-3.2" y="-3.2" width="6.4" height="6.4" fill="#fff" stroke="#8c8c8c" stroke-width="0.9"/><path d="M-1.9 0 H1.9" stroke="#000" stroke-width="0.9"/><path d="M0 -1.9 V1.9" stroke="#000" stroke-width="0.9"/></g>
<g transform="translate(69.80 373.50) scale(1)"><rect x="-3.2" y="-3.2" width="6.4" height="6.4" fill="#fff" stroke="#8c8c8c" stroke-width="0.9"/><path d="M-1.9 0 H1.9" stroke="#000" stroke-width="0.9"/><path d="M0 -1.9 V1.9" stroke="#000" stroke-width="0.9"/></g>
<g transform="translate(69.80 391.50) scale(1)"><rect x="-3.2" y="-3.2" width="6.4" height="6.4" fill="#fff" stroke="#8c8c8c" stroke-width="0.9"/><path d="M-1.9 0 H1.9" stroke="#000" stroke-width="0.9"/><path d="M0 -1.9 V1.9" stroke="#000" stroke-width="0.9"/></g>
<g transform="translate(69.80 409.50) scale(1)"><rect x="-3.2" y="-3.2" width="6.4" height="6.4" fill="#fff" stroke="#8c8c8c" stroke-width="0.9"/><path d="M-1.9 0 H1.9" stroke="#000" stroke-width="0.9"/><path d="M0 -1.9 V1.9" stroke="#000" stroke-width="0.9"/></g>
<g transform="translate(69.80 427.50) scale(1)"><rect x="-3.2" y="-3.2" width="6.4" height="6.4" fill="#fff" stroke="#8c8c8c" stroke-width="0.9"/><path d="M-1.9 0 H1.9" stroke="#000" stroke-width="0.9"/><path d="M0 -1.9 V1.9" stroke="#000" stroke-width="0.9"/></g>
<g transform="translate(69.80 445.50) scale(1)"><rect x="-3.2" y="-3.2" width="6.4" height="6.4" fill="#fff" stroke="#8c8c8c" stroke-width="0.9"/><path d="M-1.9 0 H1.9" stroke="#000" stroke-width="0.9"/><path d="M0 -1.9 V1.9" stroke="#000" stroke-width="0.9"/></g>
<g transform="translate(69.80 463.50) scale(1)"><rect x="-3.2" y="-3.2" width="6.4" height="6.4" fill="#fff" stroke="#8c8c8c" stroke-width="0.9"/><path d="M-1.9 0 H1.9" stroke="#000" stroke-width="0.9"/><path d="M0 -1.9 V1.9" stroke="#000" stroke-width="0.9"/></g>
<g transform="translate(69.80 481.50) scale(1)"><rect x="-3.2" y="-3.2" width="6.4" height="6.4" fill="#fff" stroke="#8c8c8c" stroke-width="0.9"/><path d="M-1.9 0 H1.9" stroke="#000" stroke-width="0.9"/><path d="M0 -1.9 V1.9" stroke="#000" stroke-width="0.9"/></g>
<g transform="translate(69.80 499.50) scale(1)"><rect x="-3.2" y="-3.2" width="6.4" height="6.4" fill="#fff" stroke="#8c8c8c" stroke-width="0.9"/><path d="M-1.9 0 H1.9" stroke="#000" stroke-width="0.9"/><path d="M0 -1.9 V1.9" stroke="#000" stroke-width="0.9"/></g>
<g transform="translate(69.80 517.50) scale(1)"><rect x="-3.2" y="-3.2" width="6.4" height="6.4" fill="#fff" stroke="#8c8c8c" stroke-width="0.9"/><path d="M-1.9 0 H1.9" stroke="#000" stroke-width="0.9"/><path d="M0 -1.9 V1.9" stroke="#000" stroke-width="0.9"/></g>
<g transform="translate(69.80 535.50) scale(1)"><rect x="-3.2" y="-3.2" width="6.4" height="6.4" fill="#fff" stroke="#8c8c8c" stroke-width="0.9"/><path d="M-1.9 0 H1.9" stroke="#000" stroke-width="0.9"/><path d="M0 -1.9 V1.9" stroke="#000" stroke-width="0.9"/></g>
<g transform="translate(17.30 193.50) scale(1)"><path d="M0 -1 H5 V-3 L9 0 L5 3 V1 H0Z" fill="#76a386"/></g>
<g transform="translate(35.30 211.50) scale(1)"><path d="M0 -1 H5 V-3 L9 0 L5 3 V1 H0Z" fill="#76a386"/></g>
<g transform="translate(53.50 535.50) scale(1)"><path d="M0 -1 H5 V-3 L9 0 L5 3 V1 H0Z" fill="#76a386"/></g>
<g transform="translate(26.30 168.00) scale(1)"><path d="M0.40000000000000036 1.8 V10.3 A3.3 1.4 0 0 0 7.0 10.3 V1.8 Z" fill="#2c6f6d"/><ellipse cx="3.7" cy="1.8" rx="3.3" ry="1.4" fill="#cfe4e2" stroke="#2c6f6d" stroke-width="0.8"/><path d="M7.3999999999999995 4.2 V12.7 A3.3 1.4 0 0 0 14.0 12.7 V4.2 Z" fill="#2c6f6d"/><ellipse cx="10.7" cy="4.2" rx="3.3" ry="1.4" fill="#cfe4e2" stroke="#2c6f6d" stroke-width="0.8"/></g>
<g transform="translate(45.30 188.00) scale(1)"><path d="M1 0 H6 Q7 0 7.5 1 L8 2 H12.3 Q13.5 2 13.5 3.2 V8.8 Q13.5 10 12.3 10 H1.2 Q0 10 0 8.8 V1 Q0 0 1 0Z" fill="#c8c8c8"/><path d="M0 3.4 H13.5" stroke="#999" stroke-width="0.5" opacity=".5"/><circle cx="3.8" cy="2.6" r="1.5" fill="none" stroke="#111" stroke-width="1.3"/><path d="M3.8 4 V8.3 M3.8 6.2 H5.4 M3.8 7.8 H5.2" stroke="#111" stroke-width="1.2" fill="none"/></g>
<g transform="translate(62.80 205.60) scale(1)"><g transform="translate(0.00 0.00) scale(1)"><path d="M1 0 H6 Q7 0 7.5 1 L8 2 H13.3 Q14.5 2 14.5 3.2 V9.8 Q14.5 11 13.3 11 H1.2 Q0 11 0 9.8 V1 Q0 0 1 0Z" fill="#f6cf3c"/><path d="M0 3.4 H14.5" stroke="#e0b020" stroke-width="0.5" opacity=".5"/><circle cx="3.8" cy="2.6" r="1.5" fill="none" stroke="#111" stroke-width="1.3"/><path d="M3.8 4 V8.3 M3.8 6.2 H5.4 M3.8 7.8 H5.2" stroke="#111" stroke-width="1.2" fill="none"/></g><path d="M-1.5 9.2 H2.2 V13 H-1.5Z" fill="#222"/><path d="M2 9.5 Q6 8 10.5 9.6 Q11.5 11 9.5 12.6 Q6 14.6 2 13Z" fill="#f9d9c0" stroke="#c98a6a" stroke-width="0.5"/></g>
<g transform="translate(80.60 223.50) scale(1)"><path d="M1 0 H6 Q7 0 7.5 1 L8 2 H12.8 Q14 2 14 3.2 V9.3 Q14 10.5 12.8 10.5 H1.2 Q0 10.5 0 9.3 V1 Q0 0 1 0Z" fill="#f6cf3c"/><path d="M0 3.4 H14" stroke="#e0b020" stroke-width="0.5" opacity=".5"/><circle cx="3.8" cy="2.6" r="1.5" fill="none" stroke="#111" stroke-width="1.3"/><path d="M3.8 4 V8.3 M3.8 6.2 H5.4 M3.8 7.8 H5.2" stroke="#111" stroke-width="1.2" fill="none"/></g>
<g transform="translate(80.60 241.50) scale(1)"><path d="M1 0 H6 Q7 0 7.5 1 L8 2 H12.8 Q14 2 14 3.2 V9.3 Q14 10.5 12.8 10.5 H1.2 Q0 10.5 0 9.3 V1 Q0 0 1 0Z" fill="#f6cf3c"/><path d="M0 3.4 H14" stroke="#e0b020" stroke-width="0.5" opacity=".5"/></g>
<g transform="translate(80.60 259.50) scale(1)"><path d="M1 0 H6 Q7 0 7.5 1 L8 2 H12.8 Q14 2 14 3.2 V9.3 Q14 10.5 12.8 10.5 H1.2 Q0 10.5 0 9.3 V1 Q0 0 1 0Z" fill="#f6cf3c"/><path d="M0 3.4 H14" stroke="#e0b020" stroke-width="0.5" opacity=".5"/></g>
<g transform="translate(80.60 277.50) scale(1)"><path d="M1 0 H6 Q7 0 7.5 1 L8 2 H12.8 Q14 2 14 3.2 V9.3 Q14 10.5 12.8 10.5 H1.2 Q0 10.5 0 9.3 V1 Q0 0 1 0Z" fill="#f6cf3c"/><path d="M0 3.4 H14" stroke="#e0b020" stroke-width="0.5" opacity=".5"/><circle cx="3.8" cy="2.6" r="1.5" fill="none" stroke="#111" stroke-width="1.3"/><path d="M3.8 4 V8.3 M3.8 6.2 H5.4 M3.8 7.8 H5.2" stroke="#111" stroke-width="1.2" fill="none"/></g>
<g transform="translate(80.60 295.50) scale(1)"><path d="M1 0 H6 Q7 0 7.5 1 L8 2 H12.8 Q14 2 14 3.2 V9.3 Q14 10.5 12.8 10.5 H1.2 Q0 10.5 0 9.3 V1 Q0 0 1 0Z" fill="#f6cf3c"/><path d="M0 3.4 H14" stroke="#e0b020" stroke-width="0.5" opacity=".5"/><circle cx="3.8" cy="2.6" r="1.5" fill="none" stroke="#111" stroke-width="1.3"/><path d="M3.8 4 V8.3 M3.8 6.2 H5.4 M3.8 7.8 H5.2" stroke="#111" stroke-width="1.2" fill="none"/></g>
<g transform="translate(80.60 313.50) scale(1)"><path d="M1 0 H6 Q7 0 7.5 1 L8 2 H12.8 Q14 2 14 3.2 V9.3 Q14 10.5 12.8 10.5 H1.2 Q0 10.5 0 9.3 V1 Q0 0 1 0Z" fill="#f6cf3c"/><path d="M0 3.4 H14" stroke="#e0b020" stroke-width="0.5" opacity=".5"/></g>
<g transform="translate(80.60 331.50) scale(1)"><path d="M1 0 H6 Q7 0 7.5 1 L8 2 H12.8 Q14 2 14 3.2 V9.3 Q14 10.5 12.8 10.5 H1.2 Q0 10.5 0 9.3 V1 Q0 0 1 0Z" fill="#f6cf3c"/><path d="M0 3.4 H14" stroke="#e0b020" stroke-width="0.5" opacity=".5"/><circle cx="3.8" cy="2.6" r="1.5" fill="none" stroke="#111" stroke-width="1.3"/><path d="M3.8 4 V8.3 M3.8 6.2 H5.4 M3.8 7.8 H5.2" stroke="#111" stroke-width="1.2" fill="none"/></g>
<g transform="translate(80.60 349.50) scale(1)"><path d="M1 0 H6 Q7 0 7.5 1 L8 2 H12.8 Q14 2 14 3.2 V9.3 Q14 10.5 12.8 10.5 H1.2 Q0 10.5 0 9.3 V1 Q0 0 1 0Z" fill="#f6cf3c"/><path d="M0 3.4 H14" stroke="#e0b020" stroke-width="0.5" opacity=".5"/><circle cx="3.8" cy="2.6" r="1.5" fill="none" stroke="#111" stroke-width="1.3"/><path d="M3.8 4 V8.3 M3.8 6.2 H5.4 M3.8 7.8 H5.2" stroke="#111" stroke-width="1.2" fill="none"/></g>
<g transform="translate(80.60 367.50) scale(1)"><path d="M1 0 H6 Q7 0 7.5 1 L8 2 H12.8 Q14 2 14 3.2 V9.3 Q14 10.5 12.8 10.5 H1.2 Q0 10.5 0 9.3 V1 Q0 0 1 0Z" fill="#f6cf3c"/><path d="M0 3.4 H14" stroke="#e0b020" stroke-width="0.5" opacity=".5"/></g>
<g transform="translate(96.00 385.50) scale(1)"><path d="M1 0 H6 Q7 0 7.5 1 L8 2 H12.8 Q14 2 14 3.2 V9.3 Q14 10.5 12.8 10.5 H1.2 Q0 10.5 0 9.3 V1 Q0 0 1 0Z" fill="#f6cf3c"/><path d="M0 3.4 H14" stroke="#e0b020" stroke-width="0.5" opacity=".5"/><circle cx="3.8" cy="2.6" r="1.5" fill="none" stroke="#111" stroke-width="1.3"/><path d="M3.8 4 V8.3 M3.8 6.2 H5.4 M3.8 7.8 H5.2" stroke="#111" stroke-width="1.2" fill="none"/></g>
<g transform="translate(80.60 403.50) scale(1)"><path d="M1 0 H6 Q7 0 7.5 1 L8 2 H12.8 Q14 2 14 3.2 V9.3 Q14 10.5 12.8 10.5 H1.2 Q0 10.5 0 9.3 V1 Q0 0 1 0Z" fill="#f6cf3c"/><path d="M0 3.4 H14" stroke="#e0b020" stroke-width="0.5" opacity=".5"/><circle cx="3.8" cy="2.6" r="1.5" fill="none" stroke="#111" stroke-width="1.3"/><path d="M3.8 4 V8.3 M3.8 6.2 H5.4 M3.8 7.8 H5.2" stroke="#111" stroke-width="1.2" fill="none"/></g>
<g transform="translate(80.60 421.50) scale(1)"><path d="M1 0 H6 Q7 0 7.5 1 L8 2 H12.8 Q14 2 14 3.2 V9.3 Q14 10.5 12.8 10.5 H1.2 Q0 10.5 0 9.3 V1 Q0 0 1 0Z" fill="#f6cf3c"/><path d="M0 3.4 H14" stroke="#e0b020" stroke-width="0.5" opacity=".5"/><circle cx="3.8" cy="2.6" r="1.5" fill="none" stroke="#111" stroke-width="1.3"/><path d="M3.8 4 V8.3 M3.8 6.2 H5.4 M3.8 7.8 H5.2" stroke="#111" stroke-width="1.2" fill="none"/></g>
<g transform="translate(80.60 439.50) scale(1)"><path d="M1 0 H6 Q7 0 7.5 1 L8 2 H12.8 Q14 2 14 3.2 V9.3 Q14 10.5 12.8 10.5 H1.2 Q0 10.5 0 9.3 V1 Q0 0 1 0Z" fill="#f6cf3c"/><path d="M0 3.4 H14" stroke="#e0b020" stroke-width="0.5" opacity=".5"/></g>
<g transform="translate(80.60 457.50) scale(1)"><path d="M1 0 H6 Q7 0 7.5 1 L8 2 H12.8 Q14 2 14 3.2 V9.3 Q14 10.5 12.8 10.5 H1.2 Q0 10.5 0 9.3 V1 Q0 0 1 0Z" fill="#f6cf3c"/><path d="M0 3.4 H14" stroke="#e0b020" stroke-width="0.5" opacity=".5"/><circle cx="3.8" cy="2.6" r="1.5" fill="none" stroke="#111" stroke-width="1.3"/><path d="M3.8 4 V8.3 M3.8 6.2 H5.4 M3.8 7.8 H5.2" stroke="#111" stroke-width="1.2" fill="none"/></g>
<g transform="translate(80.60 475.50) scale(1)"><path d="M1 0 H6 Q7 0 7.5 1 L8 2 H12.8 Q14 2 14 3.2 V9.3 Q14 10.5 12.8 10.5 H1.2 Q0 10.5 0 9.3 V1 Q0 0 1 0Z" fill="#f6cf3c"/><path d="M0 3.4 H14" stroke="#e0b020" stroke-width="0.5" opacity=".5"/><circle cx="3.8" cy="2.6" r="1.5" fill="none" stroke="#111" stroke-width="1.3"/><path d="M3.8 4 V8.3 M3.8 6.2 H5.4 M3.8 7.8 H5.2" stroke="#111" stroke-width="1.2" fill="none"/></g>
<g transform="translate(80.60 493.50) scale(1)"><path d="M1 0 H6 Q7 0 7.5 1 L8 2 H12.8 Q14 2 14 3.2 V9.3 Q14 10.5 12.8 10.5 H1.2 Q0 10.5 0 9.3 V1 Q0 0 1 0Z" fill="#f6cf3c"/><path d="M0 3.4 H14" stroke="#e0b020" stroke-width="0.5" opacity=".5"/><circle cx="3.8" cy="2.6" r="1.5" fill="none" stroke="#111" stroke-width="1.3"/><path d="M3.8 4 V8.3 M3.8 6.2 H5.4 M3.8 7.8 H5.2" stroke="#111" stroke-width="1.2" fill="none"/></g>
<g transform="translate(80.60 511.50) scale(1)"><path d="M1 0 H6 Q7 0 7.5 1 L8 2 H12.8 Q14 2 14 3.2 V9.3 Q14 10.5 12.8 10.5 H1.2 Q0 10.5 0 9.3 V1 Q0 0 1 0Z" fill="#f6cf3c"/><path d="M0 3.4 H14" stroke="#e0b020" stroke-width="0.5" opacity=".5"/><circle cx="3.8" cy="2.6" r="1.5" fill="none" stroke="#111" stroke-width="1.3"/><path d="M3.8 4 V8.3 M3.8 6.2 H5.4 M3.8 7.8 H5.2" stroke="#111" stroke-width="1.2" fill="none"/></g>
<g transform="translate(80.60 529.50) scale(1)"><path d="M1 0 H6 Q7 0 7.5 1 L8 2 H12.8 Q14 2 14 3.2 V9.3 Q14 10.5 12.8 10.5 H1.2 Q0 10.5 0 9.3 V1 Q0 0 1 0Z" fill="#f6cf3c"/><path d="M0 3.4 H14" stroke="#e0b020" stroke-width="0.5" opacity=".5"/><circle cx="3.8" cy="2.6" r="1.5" fill="none" stroke="#111" stroke-width="1.3"/><path d="M3.8 4 V8.3 M3.8 6.2 H5.4 M3.8 7.8 H5.2" stroke="#111" stroke-width="1.2" fill="none"/></g>
<g transform="translate(80.00 383.50) scale(1)"><rect x="0" y="0" width="1.4" height="15" fill="#111"/><rect x="1.4" y="0.5" width="10.2" height="8.5" fill="#168a84"/></g>
<g transform="translate(97.00 421.00) scale(1)"><rect x="0" y="0" width="12" height="12" fill="#2f9ad0"/><rect x="0" y="0" width="12" height="12" fill="none" stroke="#1f7fb4" stroke-width="0.8"/><path d="M2 3 H6.6 M4.3 3 V10" stroke="#fff" stroke-width="1.7" fill="none"/><path d="M8.7 5 V10" stroke="#fff" stroke-width="1.7"/><rect x="7.9" y="2" width="1.7" height="1.8" fill="#fff"/></g>
<g transform="translate(97.00 439.00) scale(1)"><rect x="0" y="0" width="12" height="12" fill="#2f9ad0"/><rect x="0" y="0" width="12" height="12" fill="none" stroke="#1f7fb4" stroke-width="0.8"/><path d="M2 3 H6.6 M4.3 3 V10" stroke="#fff" stroke-width="1.7" fill="none"/><path d="M8.7 5 V10" stroke="#fff" stroke-width="1.7"/><rect x="7.9" y="2" width="1.7" height="1.8" fill="#fff"/></g>
<g transform="translate(97.00 475.00) scale(1)"><rect x="0" y="0" width="12" height="12" fill="#c99a22"/><path d="M2.5 9.5 L3.3 7 L8.2 2.1 L9.9 3.8 L5 8.7Z" fill="#fff"/><path d="M2.5 9.5 L3.3 7 L5 8.7Z" fill="#f3e6c0"/></g>
<g transform="translate(113.50 475.00) scale(1)"><rect x="0" y="0" width="12" height="12" fill="#2f9ad0"/><rect x="0" y="0" width="12" height="12" fill="none" stroke="#1f7fb4" stroke-width="0.8"/><path d="M2 3 H6.6 M4.3 3 V10" stroke="#fff" stroke-width="1.7" fill="none"/><path d="M8.7 5 V10" stroke="#fff" stroke-width="1.7"/><rect x="7.9" y="2" width="1.7" height="1.8" fill="#fff"/></g>
<g transform="translate(97.00 529.00) scale(1)"><rect x="0" y="0" width="12" height="12" fill="#c99a22"/><path d="M2.5 9.5 L3.3 7 L8.2 2.1 L9.9 3.8 L5 8.7Z" fill="#fff"/><path d="M2.5 9.5 L3.3 7 L5 8.7Z" fill="#f3e6c0"/></g>
<g transform="translate(113.50 529.00) scale(1)"><rect x="0" y="0" width="12" height="12" fill="#e8353a"/><rect x="4.8" y="1.8" width="2.4" height="5.4" fill="#fff"/><rect x="4.8" y="8.4" width="2.4" height="2.2" fill="#fff"/><path d="M2.2 1.5 V10.5 M9.8 1.5 V10.5" stroke="#fff" stroke-width="1" opacity=".9"/></g>
<g transform="translate(130.00 529.00) scale(1)"><rect x="0" y="0" width="12" height="12" fill="#2f9ad0"/><rect x="0" y="0" width="12" height="12" fill="none" stroke="#1f7fb4" stroke-width="0.8"/><path d="M2 3 H6.6 M4.3 3 V10" stroke="#fff" stroke-width="1.7" fill="none"/><path d="M8.7 5 V10" stroke="#fff" stroke-width="1.7"/><rect x="7.9" y="2" width="1.7" height="1.8" fill="#fff"/></g>
<rect x="114.5" y="420" width="70" height="16.5" fill="none" stroke="#444" stroke-width="1" stroke-dasharray="1 1.5"/></svg>
<span class="t" style="left:21.0px;top:3.0px;height:15px;line-height:15px;font-size:11px;font-weight:bold;color:#fff;transform:scaleX(0.983)">DatAdvantage  - [Resource: corpfs02b]</span>
<span class="t" style="left:15.5px;top:22.5px;height:14px;line-height:14px;font-size:10px;font-weight:normal;color:#10204a;transform:scaleX(0.961)">File</span>
<span class="t" style="left:54.0px;top:22.5px;height:14px;line-height:14px;font-size:10px;font-weight:normal;color:#10204a;transform:scaleX(1.041)">Tabs</span>
<span class="t" style="left:98.0px;top:22.5px;height:14px;line-height:14px;font-size:10px;font-weight:normal;color:#10204a;transform:scaleX(1.113)">Tools</span>
<span class="t" style="left:147.0px;top:22.5px;height:14px;line-height:14px;font-size:10px;font-weight:normal;color:#10204a;transform:scaleX(1.021)">Help</span>
<span class="t" style="left:26.0px;top:45.5px;height:14px;line-height:14px;font-size:10px;font-weight:normal;color:#10204a;transform:scaleX(1.011)">Work Area</span>
<span class="t" style="left:114.0px;top:45.5px;height:14px;line-height:14px;font-size:10px;font-weight:normal;color:#10204a;transform:scaleX(0.997)">Review Area</span>
<span class="t" style="left:211.0px;top:45.5px;height:14px;line-height:14px;font-size:10px;font-weight:normal;color:#22142a;transform:scaleX(1.025)">Statistics</span>
<span class="t" style="left:290.0px;top:45.5px;height:14px;line-height:14px;font-size:10px;font-weight:normal;color:#10204a;transform:scaleX(1.079)">Log</span>
<span class="t" style="left:347.0px;top:45.5px;height:14px;line-height:14px;font-size:10px;font-weight:normal;color:#10204a;transform:scaleX(1.028)">Reports</span>
<span class="t" style="left:423.0px;top:45.5px;height:14px;line-height:14px;font-size:10px;font-weight:normal;color:#10204a;transform:scaleX(1.017)">Alerts</span>
<span class="t" style="left:489.8px;top:45.5px;height:14px;line-height:14px;font-size:10px;font-weight:normal;color:#10204a;transform:scaleX(1.128);width:19.4px;overflow:hidden">Print</span>
<span class="t" style="left:573.0px;top:44.2px;height:18px;line-height:18px;font-size:14.5px;font-weight:normal;color:#1a2233;transform:scaleX(1.007)">Statistics: C:\Share\finance[cor...</span>
<span class="t" style="left:34.0px;top:70.5px;height:16px;line-height:16px;font-size:12px;font-weight:bold;color:#fff;transform:scaleX(1.037)">Directories</span>
<span class="t" style="left:223.0px;top:70.5px;height:16px;line-height:16px;font-size:12px;font-weight:bold;color:#fff;transform:scaleX(1.012)">Statistics</span>
<span class="t" style="left:30.0px;top:94.5px;height:14px;line-height:14px;font-size:10px;font-weight:normal;color:#10204a;transform:scaleX(1.009)">Reload</span>
<span class="t" style="left:108.0px;top:94.5px;height:14px;line-height:14px;font-size:10px;font-weight:normal;color:#10204a;transform:scaleX(1.023)">View</span>
<span class="t" style="left:182.0px;top:88.5px;height:14px;line-height:14px;font-size:10px;font-weight:bold;color:#000;transform:scaleX(1.250)">»</span>
<span class="t" style="left:11.0px;top:115.6px;height:14px;line-height:14px;font-size:10.3px;font-weight:normal;color:#000;transform:scaleX(0.979)">Resources:</span>
<span class="t" style="left:70.0px;top:115.6px;height:14px;line-height:14px;font-size:10.3px;font-weight:normal;color:#000;transform:scaleX(0.925)">corpfs02b, CentOS5, EX(</span>
<span class="t" style="left:11.0px;top:133.7px;height:14px;line-height:14px;font-size:10.3px;font-weight:normal;color:#000;transform:scaleX(0.989)">Look For:</span>
<span class="t" style="left:147.5px;top:134.4px;height:14px;line-height:14px;font-size:10.3px;font-weight:normal;color:#2455a8;transform:scaleX(0.950)">Search</span>
<span class="t" style="left:13.7px;top:150.7px;height:14px;line-height:14px;font-size:10.3px;font-weight:normal;color:#1a1a2a;transform:scaleX(0.978)">Directory</span>
<span class="t" style="left:206.0px;top:99.0px;height:14px;line-height:14px;font-size:10.3px;font-weight:normal;color:#000;transform:scaleX(0.957)">From</span>
<span class="t" style="left:245.0px;top:99.0px;height:14px;line-height:14px;font-size:10.3px;font-weight:normal;color:#000;transform:scaleX(0.898)">Saturday</span>
<span class="t" style="left:289.0px;top:99.0px;height:14px;line-height:14px;font-size:10.3px;font-weight:normal;color:#000;transform:scaleX(0.800)">,</span>
<span class="t" style="left:308.0px;top:99.0px;height:14px;line-height:14px;font-size:10.3px;font-weight:normal;color:#000;transform:scaleX(0.922)">April</span>
<span class="t" style="left:344.0px;top:99.0px;height:14px;line-height:14px;font-size:10.3px;font-weight:normal;color:#000;transform:scaleX(0.941)">11, 2009</span>
<span class="t" style="left:428.0px;top:99.0px;height:14px;line-height:14px;font-size:10.3px;font-weight:normal;color:#000;transform:scaleX(0.920)">To</span>
<span class="t" style="left:459.0px;top:99.0px;height:14px;line-height:14px;font-size:10.3px;font-weight:normal;color:#000;transform:scaleX(0.895)">Tuesday</span>
<span class="t" style="left:503.0px;top:99.0px;height:14px;line-height:14px;font-size:10.3px;font-weight:normal;color:#000;transform:scaleX(0.800)">,</span>
<span class="t" style="left:521.0px;top:99.0px;height:14px;line-height:14px;font-size:10.3px;font-weight:normal;color:#000;transform:scaleX(0.922)">April</span>
<span class="t" style="left:557.0px;top:99.0px;height:14px;line-height:14px;font-size:10.3px;font-weight:normal;color:#000;transform:scaleX(0.923)">18, 2017</span>
<span class="t" style="left:661.0px;top:98.4px;height:14px;line-height:14px;font-size:10.3px;font-weight:normal;color:#000;transform:scaleX(0.888)">Search</span>
<span class="t" style="left:720.0px;top:99.0px;height:14px;line-height:14px;font-size:10.3px;font-weight:normal;color:#000;transform:scaleX(0.908)">Show:</span>
<span class="t" style="left:777.0px;top:99.0px;height:14px;line-height:14px;font-size:10.3px;font-weight:normal;color:#000;transform:scaleX(0.847)">Cha</span>
<span class="t" style="left:206.0px;top:128.2px;height:14px;line-height:14px;font-size:10px;font-weight:normal;color:#9a9a9a;transform:scaleX(1.028)">Activity By Date</span>
<span class="t" style="left:285.0px;top:128.2px;height:14px;line-height:14px;font-size:10px;font-weight:normal;color:#9a9a9a;transform:scaleX(1.021)">Subdirectory Statistics</span>
<span class="t" style="left:393.0px;top:128.2px;height:14px;line-height:14px;font-size:10px;font-weight:bold;color:#000;transform:scaleX(1.005)">User Access</span>
<span class="t" style="left:460.0px;top:128.2px;height:14px;line-height:14px;font-size:10px;font-weight:normal;color:#9a9a9a;transform:scaleX(1.026)">Inactive Users</span>
<span class="t" style="left:530.5px;top:128.2px;height:14px;line-height:14px;font-size:10px;font-weight:normal;color:#9a9a9a;transform:scaleX(1.008)">Least Active Users</span>
<span class="t" style="left:620.0px;top:128.2px;height:14px;line-height:14px;font-size:10px;font-weight:normal;color:#9a9a9a;transform:scaleX(1.035)">Inactive Directories</span>
<span class="t" style="left:714.5px;top:128.2px;height:14px;line-height:14px;font-size:10px;font-weight:normal;color:#9a9a9a;transform:scaleX(1.042)">Activity</span>
<span class="t" style="left:425.0px;top:234.5px;height:14px;line-height:14px;font-size:10px;font-weight:normal;color:#14213a;transform:scaleX(0.987)">8.83%</span>
<span class="t" style="left:648.0px;top:216.2px;height:14px;line-height:14px;font-size:10px;font-weight:normal;color:#14213a;transform:scaleX(0.987)">5.61%</span>
<span class="t" style="left:661.0px;top:234.6px;height:14px;line-height:14px;font-size:10px;font-weight:normal;color:#14213a;transform:scaleX(0.987)">9.36%</span>
<span class="t" style="left:682.0px;top:271.2px;height:14px;line-height:14px;font-size:10px;font-weight:normal;color:#14213a;transform:scaleX(0.987)">7.54%</span>
<span class="t" style="left:694.0px;top:308.3px;height:14px;line-height:14px;font-size:10px;font-weight:normal;color:#14213a;transform:scaleX(0.987)">8.15%</span>
<span class="t" style="left:689.0px;top:363.8px;height:14px;line-height:14px;font-size:10px;font-weight:normal;color:#14213a;transform:scaleX(0.987)">4.86%</span>
<span class="t" style="left:661.0px;top:418.6px;height:14px;line-height:14px;font-size:10px;font-weight:normal;color:#14213a;transform:scaleX(1.002)">29.85%</span>
<span class="t" style="left:391.0px;top:308.0px;height:14px;line-height:14px;font-size:10px;font-weight:normal;color:#14213a;transform:scaleX(0.952)">25.8%</span>
<span class="t" style="left:256.0px;top:433.6px;height:14px;line-height:14px;font-size:10px;font-weight:normal;color:#111;transform:scaleX(1.015)">Erin Manning(corp.local)</span>
<span class="t" style="left:256.0px;top:446.3px;height:14px;line-height:14px;font-size:10px;font-weight:normal;color:#111;transform:scaleX(1.009)">Ann Schoenberger(corp.local)</span>
<span class="t" style="left:256.0px;top:459.0px;height:14px;line-height:14px;font-size:10px;font-weight:normal;color:#111;transform:scaleX(1.028)">Allen Carey(corp.local)</span>
<span class="t" style="left:256.0px;top:471.7px;height:14px;line-height:14px;font-size:10px;font-weight:normal;color:#111;transform:scaleX(1.013)">Margaret Coakley(corp.local)</span>
<span class="t" style="left:256.0px;top:484.4px;height:14px;line-height:14px;font-size:10px;font-weight:normal;color:#111;transform:scaleX(0.994)">4.65-4.71% of events, 2 users</span>
<span class="t" style="left:256.0px;top:497.1px;height:14px;line-height:14px;font-size:10px;font-weight:normal;color:#111;transform:scaleX(0.990)">3.34-4.2% of events, 2 users</span>
<span class="t" style="left:256.0px;top:509.8px;height:14px;line-height:14px;font-size:10px;font-weight:normal;color:#111;transform:scaleX(0.994)">1.31-2.21% of events, 5 users</span>
<span class="t" style="left:256.0px;top:522.5px;height:14px;line-height:14px;font-size:10px;font-weight:normal;color:#111;transform:scaleX(0.994)">0.05-1.13% of events, 9 users</span>
<span class="t" style="left:201.0px;top:557.0px;height:14px;line-height:14px;font-size:10px;font-weight:normal;color:#000;transform:scaleX(1.029)">Represents the distribution of events per user on the specified directory</span>
<span class="t" style="left:33.5px;top:557.5px;height:16px;line-height:16px;font-size:12px;font-weight:bold;color:#0c1a40;transform:scaleX(1.009)">Users and Groups</span>
<span class="t" style="left:33.5px;top:580.8px;height:16px;line-height:16px;font-size:12px;font-weight:bold;color:#0c1a40;transform:scaleX(1.045)">Directories</span>
<span class="t" style="left:372.0px;top:609.5px;height:14px;line-height:14px;font-size:10px;font-weight:normal;color:#000;transform:scaleX(1.009)">(0) New Msg.</span>
<span class="t tr" style="left:47.5px;top:168.7px;height:14px;line-height:14px;font-size:10.6px;font-weight:normal;color:#1a1a1a;transform:scaleX(0.849)">corpfs02b</span>
<span class="t tr" style="left:65.5px;top:186.7px;height:14px;line-height:14px;font-size:10.6px;font-weight:normal;color:#1a1a1a;transform:scaleX(0.802)">C:</span>
<span class="t tr" style="left:83.5px;top:204.7px;height:14px;line-height:14px;font-size:10.6px;font-weight:normal;color:#1a1a1a;transform:scaleX(0.866)">Share</span>
<span class="t tr" style="left:101.0px;top:222.7px;height:14px;line-height:14px;font-size:10.6px;font-weight:normal;color:#1a1a1a;transform:scaleX(0.914)">apps</span>
<span class="t tr" style="left:101.0px;top:240.7px;height:14px;line-height:14px;font-size:10.6px;font-weight:normal;color:#1a1a1a;transform:scaleX(0.848)">B4</span>
<span class="t tr" style="left:101.0px;top:258.7px;height:14px;line-height:14px;font-size:10.6px;font-weight:normal;color:#1a1a1a;transform:scaleX(0.877)">B4Released-Applic</span>
<span class="t tr" style="left:101.0px;top:276.7px;height:14px;line-height:14px;font-size:10.6px;font-weight:normal;color:#1a1a1a;transform:scaleX(0.901)">BBB-Project</span>
<span class="t tr" style="left:101.0px;top:294.7px;height:14px;line-height:14px;font-size:10.6px;font-weight:normal;color:#1a1a1a;transform:scaleX(0.800)">BI</span>
<span class="t tr" style="left:101.0px;top:312.7px;height:14px;line-height:14px;font-size:10.6px;font-weight:normal;color:#1a1a1a;transform:scaleX(0.900)">Corporate Finance</span>
<span class="t tr" style="left:101.0px;top:330.7px;height:14px;line-height:14px;font-size:10.6px;font-weight:normal;color:#1a1a1a;transform:scaleX(0.920)">databases</span>
<span class="t tr" style="left:101.0px;top:348.7px;height:14px;line-height:14px;font-size:10.6px;font-weight:normal;color:#1a1a1a;transform:scaleX(0.902)">DataShare1</span>
<span class="t tr" style="left:101.0px;top:366.7px;height:14px;line-height:14px;font-size:10.6px;font-weight:normal;color:#1a1a1a;transform:scaleX(0.951)">dsr</span>
<span class="t tr" style="left:117.5px;top:384.7px;height:14px;line-height:14px;font-size:10.6px;font-weight:normal;color:#1a1a1a;transform:scaleX(0.877)">Embd-Enginee</span>
<span class="t tr" style="left:101.5px;top:402.7px;height:14px;line-height:14px;font-size:10.6px;font-weight:normal;color:#1a1a1a;transform:scaleX(0.886)">ERP-Arc</span>
<span class="t tr" style="left:117.5px;top:420.7px;height:14px;line-height:14px;font-size:10.6px;font-weight:normal;color:#1a1a1a;transform:scaleX(0.922)">finance</span>
<span class="t tr" style="left:119.0px;top:438.7px;height:14px;line-height:14px;font-size:10.6px;font-weight:normal;color:#1a1a1a;transform:scaleX(0.890)">Fondue</span>
<span class="t tr" style="left:101.5px;top:456.7px;height:14px;line-height:14px;font-size:10.6px;font-weight:normal;color:#1a1a1a;transform:scaleX(0.910)">groups</span>
<span class="t tr" style="left:135.0px;top:474.7px;height:14px;line-height:14px;font-size:10.6px;font-weight:normal;color:#1a1a1a;transform:scaleX(0.849)">HR</span>
<span class="t tr" style="left:101.5px;top:492.7px;height:14px;line-height:14px;font-size:10.6px;font-weight:normal;color:#1a1a1a;transform:scaleX(0.917)">HR-Private</span>
<span class="t tr" style="left:101.5px;top:510.7px;height:14px;line-height:14px;font-size:10.6px;font-weight:normal;color:#1a1a1a;transform:scaleX(0.902)">HumanResources</span>
<span class="t tr" style="left:150.0px;top:528.7px;height:14px;line-height:14px;font-size:10.6px;font-weight:normal;color:#1a1a1a;transform:scaleX(0.983)">legal</span>
<div style="left:8px;top:540px;width:172px;height:13px;background:#fff"></div>
<div style="left:180px;top:165px;width:13.5px;height:388px;background:#eceae6"></div>
<div style="left:180px;top:165.5px;width:13px;height:13.7px;background:#d6d2ca;box-shadow:inset 1px 1px 0 #fff,inset -1px -1px 0 #404040"></div>
<div style="left:180px;top:179.2px;width:13px;height:187px;background:#d6d2ca;box-shadow:inset 1px 1px 0 #fff,inset -1px -1px 0 #404040"></div>
<div style="left:180px;top:527px;width:13px;height:13px;background:#d6d2ca;box-shadow:inset 1px 1px 0 #fff,inset -1px -1px 0 #404040"></div>
<div style="left:8px;top:540px;width:172px;height:13px;background:#eceae6"></div>
<div style="left:9px;top:540px;width:13px;height:13px;background:#d6d2ca;box-shadow:inset 1px 1px 0 #fff,inset -1px -1px 0 #404040"></div>
<div style="left:22px;top:540px;width:15.5px;height:13px;background:#d6d2ca;box-shadow:inset 1px 1px 0 #fff,inset -1px -1px 0 #404040"></div>
<div style="left:167px;top:540px;width:13px;height:13px;background:#d6d2ca;box-shadow:inset 1px 1px 0 #fff,inset -1px -1px 0 #404040"></div>
<div style="left:180px;top:540px;width:13.5px;height:13px;background:#d6d2ca"></div>
<div style="left:193.3px;top:67px;width:1.3px;height:535px;background:#2f4a66"></div><svg width="800" height="627" viewBox="0 0 800 627" style="position:absolute;left:0;top:0"><path d="M183.2 174.3 H189.8 L186.5 170.7Z" fill="#000"/><path d="M183.2 531.8 H189.8 L186.5 535.4Z" fill="#000"/><path d="M17.3 543.2 V549.8 L13.7 546.5Z" fill="#000"/><path d="M171.7 543.2 V549.8 L175.3 546.5Z" fill="#000"/><rect x="196" y="292" width="1.6" height="1.6" fill="#e6eef6"/><rect x="196.6" y="293" width="1" height="1" fill="#3c566f"/><rect x="196" y="296" width="1.6" height="1.6" fill="#e6eef6"/><rect x="196.6" y="297" width="1" height="1" fill="#3c566f"/><rect x="196" y="300" width="1.6" height="1.6" fill="#e6eef6"/><rect x="196.6" y="301" width="1" height="1" fill="#3c566f"/><rect x="196" y="304" width="1.6" height="1.6" fill="#e6eef6"/><rect x="196.6" y="305" width="1" height="1" fill="#3c566f"/><rect x="196" y="308" width="1.6" height="1.6" fill="#e6eef6"/><rect x="196.6" y="309" width="1" height="1" fill="#3c566f"/><rect x="196" y="312" width="1.6" height="1.6" fill="#e6eef6"/><rect x="196.6" y="313" width="1" height="1" fill="#3c566f"/><rect x="196" y="316" width="1.6" height="1.6" fill="#e6eef6"/><rect x="196.6" y="317" width="1" height="1" fill="#3c566f"/><rect x="196" y="320" width="1.6" height="1.6" fill="#e6eef6"/><rect x="196.6" y="321" width="1" height="1" fill="#3c566f"/><rect x="196" y="324" width="1.6" height="1.6" fill="#e6eef6"/><rect x="196.6" y="325" width="1" height="1" fill="#3c566f"/><rect x="196" y="328" width="1.6" height="1.6" fill="#e6eef6"/><rect x="196.6" y="329" width="1" height="1" fill="#3c566f"/><rect x="196" y="332" width="1.6" height="1.6" fill="#e6eef6"/><rect x="196.6" y="333" width="1" height="1" fill="#3c566f"/><rect x="196" y="336" width="1.6" height="1.6" fill="#e6eef6"/><rect x="196.6" y="337" width="1" height="1" fill="#3c566f"/><rect x="196" y="340" width="1.6" height="1.6" fill="#e6eef6"/><rect x="196.6" y="341" width="1" height="1" fill="#3c566f"/><rect x="196" y="344" width="1.6" height="1.6" fill="#e6eef6"/><rect x="196.6" y="345" width="1" height="1" fill="#3c566f"/><rect x="196" y="348" width="1.6" height="1.6" fill="#e6eef6"/><rect x="196.6" y="349" width="1" height="1" fill="#3c566f"/><rect x="196" y="352" width="1.6" height="1.6" fill="#e6eef6"/><rect x="196.6" y="353" width="1" height="1" fill="#3c566f"/><rect x="196" y="356" width="1.6" height="1.6" fill="#e6eef6"/><rect x="196.6" y="357" width="1" height="1" fill="#3c566f"/><rect x="196" y="360" width="1.6" height="1.6" fill="#e6eef6"/><rect x="196.6" y="361" width="1" height="1" fill="#3c566f"/><rect x="196" y="364" width="1.6" height="1.6" fill="#e6eef6"/><rect x="196.6" y="365" width="1" height="1" fill="#3c566f"/><rect x="196" y="368" width="1.6" height="1.6" fill="#e6eef6"/><rect x="196.6" y="369" width="1" height="1" fill="#3c566f"/><rect x="196" y="372" width="1.6" height="1.6" fill="#e6eef6"/><rect x="196.6" y="373" width="1" height="1" fill="#3c566f"/><rect x="196" y="376" width="1.6" height="1.6" fill="#e6eef6"/><rect x="196.6" y="377" width="1" height="1" fill="#3c566f"/><path d="M197.8 285.5 V290.5 L195.3 288Z" fill="#23406f"/><path d="M197.8 380 V385 L195.3 382.5Z" fill="#23406f"/></svg>
</div></body></html>
